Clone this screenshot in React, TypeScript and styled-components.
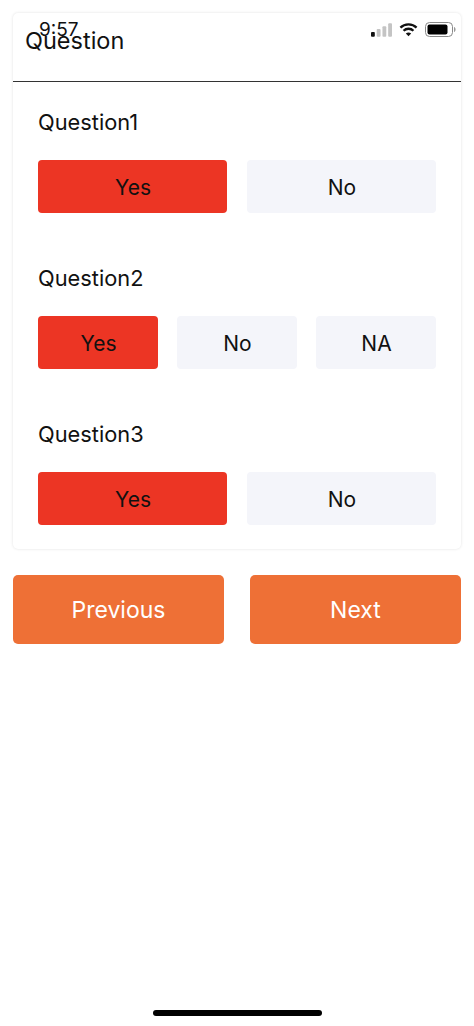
import { createGlobalStyle } from "styled-components";
import styled from "styled-components";

const GlobalStyle = createGlobalStyle`
  html, body {
    margin: 0;
    padding: 0;
    background-color: #fff;
    font-family: Inter, "Liberation Sans", sans-serif;
  }
`;

const Screen = styled.div`
  position: relative;
  width: 474px;
  height: 1026px;
  padding: 13px 13px 0 13px;
  box-sizing: border-box;
  background-color: #fff;
  overflow: hidden;
`;

const StatusBar = styled.div`
  position: absolute;
  top: 0;
  left: 0;
  right: 0;
  height: 44px;
  display: flex;
  justify-content: space-between;
  align-items: flex-start;
  padding: 19px 18px 0 39px;
  box-sizing: border-box;
`;

const Clock = styled.span`
  font-size: 19px;
  line-height: 21px;
  color: #111;
`;

const StatusIcons = styled.div`
  display: flex;
  align-items: center;
  gap: 7px;
  height: 21px;
`;

const Card = styled.div`
  width: 448px;
  height: 536px;
  box-sizing: border-box;
  background-color: #fff;
  border-radius: 5px;
  box-shadow: 0 0 3px rgba(0, 0, 0, 0.12);
`;

const CardHeader = styled.div`
  height: 69px;
  box-sizing: border-box;
  padding: 13px 12px 0 12px;
  border-bottom: 1px solid #333;
  font-size: 23.5px;
  line-height: 30px;
  color: #111;
`;

const CardBody = styled.div`
  padding: 24.5px 25px 0 25px;
`;

const Question = styled.div`
  height: 156px;
`;

const QuestionLabel = styled.div`
  height: 31px;
  margin-bottom: 22.5px;
  font-size: 21.8px;
  line-height: 31px;
  color: #111;
`;

const Options = styled.div<{ $count: number }>`
  display: grid;
  grid-template-columns: repeat(${(p) => p.$count}, 1fr);
  gap: ${(p) => (p.$count === 3 ? "19px" : "20px")};
`;

const Option = styled.div<{ $selected?: boolean }>`
  height: 53px;
  box-sizing: border-box;
  padding: 1px 0 0 1px;
  display: flex;
  align-items: center;
  justify-content: center;
  border-radius: 4px;
  font-size: 21px;
  color: #111;
  background-color: ${(p) => (p.$selected ? "#ec3524" : "#f4f5fa")};
`;

const NavRow = styled.div`
  display: flex;
  justify-content: space-between;
  margin-top: 26px;
`;

const NavButton = styled.div`
  width: 211px;
  height: 69px;
  display: flex;
  align-items: center;
  justify-content: center;
  border-radius: 5px;
  background-color: #ee7036;
  color: #fff;
  font-size: 23px;
`;

const HomeIndicator = styled.div`
  position: absolute;
  left: 153px;
  bottom: 10px;
  width: 169px;
  height: 6px;
  border-radius: 3px;
  background-color: #000;
`;

const questions = [
  { label: "Question1", options: ["Yes", "No"] },
  { label: "Question2", options: ["Yes", "No", "NA"] },
  { label: "Question3", options: ["Yes", "No"] },
];

function App() {
  return (
    <Screen>
      <GlobalStyle />
      <Card>
        <CardHeader>Question</CardHeader>
        <CardBody>
          {questions.map((q) => (
            <Question key={q.label}>
              <QuestionLabel>{q.label}</QuestionLabel>
              <Options $count={q.options.length}>
                {q.options.map((o, i) => (
                  <Option key={o} $selected={i === 0}>
                    {o}
                  </Option>
                ))}
              </Options>
            </Question>
          ))}
        </CardBody>
      </Card>
      <NavRow>
        <NavButton>Previous</NavButton>
        <NavButton>Next</NavButton>
      </NavRow>
      <StatusBar>
        <Clock>9:57</Clock>
        <StatusIcons>
          <svg width="21" height="14" viewBox="0 0 22 14">
            <rect x="0" y="9" width="4" height="5" rx="1" fill="#111" />
            <rect x="6" y="6" width="4" height="8" rx="1" fill="#c4c4c4" />
            <rect x="12" y="3" width="4" height="11" rx="1" fill="#c4c4c4" />
            <rect x="18" y="0" width="4" height="14" rx="1" fill="#c4c4c4" />
          </svg>
          <svg width="19" height="15" viewBox="0 0 20 15" fill="none">
            <path d="M1.5 5.5C6 1 14 1 18.5 5.5" stroke="#111" strokeWidth="2.4" />
            <path d="M4.8 8.8C7.6 6 12.4 6 15.2 8.8" stroke="#111" strokeWidth="2.4" />
            <path d="M7.2 11.6L10 14.5L12.8 11.6C11.2 10.2 8.8 10.2 7.2 11.6Z" fill="#111" />
          </svg>
          <svg width="31" height="15" viewBox="0 0 31 15" fill="none">
            <rect x="0.5" y="0.5" width="27" height="14" rx="4" stroke="#888" />
            <rect x="2.5" y="2.5" width="20" height="10" rx="2" fill="#000" />
            <path d="M29 5v5c1-.3 1.6-1.3 1.6-2.5S30 5.300 29 5z" fill="#999" />
          </svg>
        </StatusIcons>
      </StatusBar>
      <HomeIndicator />
    </Screen>
  );
}

export default App;
